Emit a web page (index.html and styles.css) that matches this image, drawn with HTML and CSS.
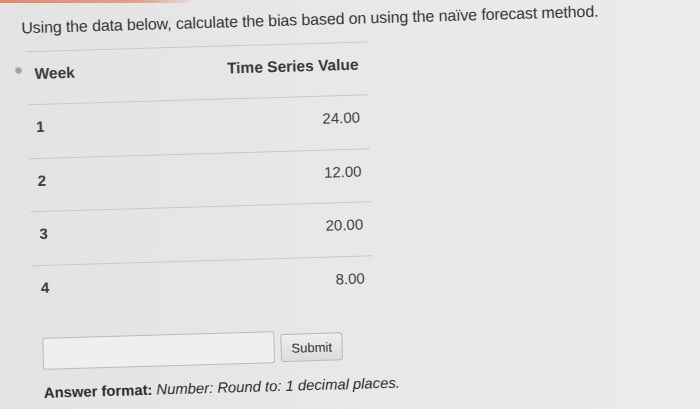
FILE: index.html
```html
<!DOCTYPE html>
<html>
<head>
<meta charset="utf-8">
<link rel="stylesheet" href="styles.css">
</head>
<body>
<div class="topbar"></div>
<main class="page">
  <p class="question">Using the data below, calculate the bias based on using the naïve forecast method.</p>
  <div class="table">
    <div class="row head">
      <span class="dot"></span>
      <div class="c1">Week</div>
      <div class="c2">Time Series Value</div>
    </div>
    <div class="row">
      <div class="c1">1</div>
      <div class="c2">24.00</div>
    </div>
    <div class="row">
      <div class="c1">2</div>
      <div class="c2">12.00</div>
    </div>
    <div class="row">
      <div class="c1">3</div>
      <div class="c2">20.00</div>
    </div>
    <div class="row last">
      <div class="c1">4</div>
      <div class="c2">8.00</div>
    </div>
  </div>
  <div class="answer">
    <input class="field" type="text">
    <button class="submit">Submit</button>
  </div>
  <p class="format"><b>Answer format:</b> <i>Number: Round to: 1 decimal places.</i></p>
</main>
</body>
</html>
```
FILE: styles.css
```css
html, body {
  margin: 0;
  padding: 0;
}
body {
  background: linear-gradient(90deg, #e3e3e3 0%, #e8e8e8 50%, #ebebeb 100%);
  width: 700px;
  height: 409px;
  overflow: hidden;
  font-family: "Liberation Sans", Arial, sans-serif;
  color: #333;
}
.topbar {
  width: 190px;
  height: 3px;
  background: linear-gradient(90deg, #e5896a, #e4a189 75%, #e6dcd8);
}
.page {
  padding: 0 0 0 21px;
  transform: rotate(-1.66deg);
  transform-origin: 0 0;
}
.question {
  margin: 16px 0 0;
  font-size: 16px;
  line-height: 20px;
  letter-spacing: -0.13px;
  color: #383838;
  white-space: nowrap;
}
.table {
  margin: 13px 0 0 4px;
  width: 341px;
  border-top: 1px solid #cacaca;
}
.row {
  position: relative;
  display: flex;
  justify-content: space-between;
  height: 52.5px;
  border-bottom: 1px solid #c9c9c9;
  font-size: 15px;
  line-height: 18px;
  color: #444;
  padding: 0 9px 0 8px;
}
.row.head {
  height: 52px;
  font-weight: bold;
  font-size: 15.5px;
  color: #3a3a3a;
}
.row.last {
  border-bottom: none;
}
.c1,
.c2 {
  padding-top: 13px;
}
.c1 {
  font-weight: bold;
  color: #3d3d3d;
}
.dot {
  position: absolute;
  left: -11px;
  top: 15px;
  width: 6px;
  height: 6px;
  border-radius: 50%;
  background: #a0a0a0;
  box-shadow: 0 0 2px #bbb;
}
.answer {
  display: flex;
  gap: 6px;
  align-items: center;
  margin: 20px 0 0 12px;
}
.field {
  width: 232px;
  height: 32px;
  box-sizing: border-box;
  border: 1px solid #bcbcbc;
  border-radius: 3px;
  background: #efefef;
  margin: 0;
}
.submit {
  height: 28px;
  width: 62px;
  padding: 0;
  margin: 2px 0 0;
  font-family: "Liberation Sans", Arial, sans-serif;
  font-size: 13px;
  color: #333;
  background: linear-gradient(#eeeeee, #dcdcdc);
  border: 1px solid #b8b8b8;
  border-radius: 3px;
}
.format {
  margin: 15px 0 0 12px;
  font-size: 14.8px;
  line-height: 17px;
  color: #2e2e2e;
  white-space: nowrap;
}
```
